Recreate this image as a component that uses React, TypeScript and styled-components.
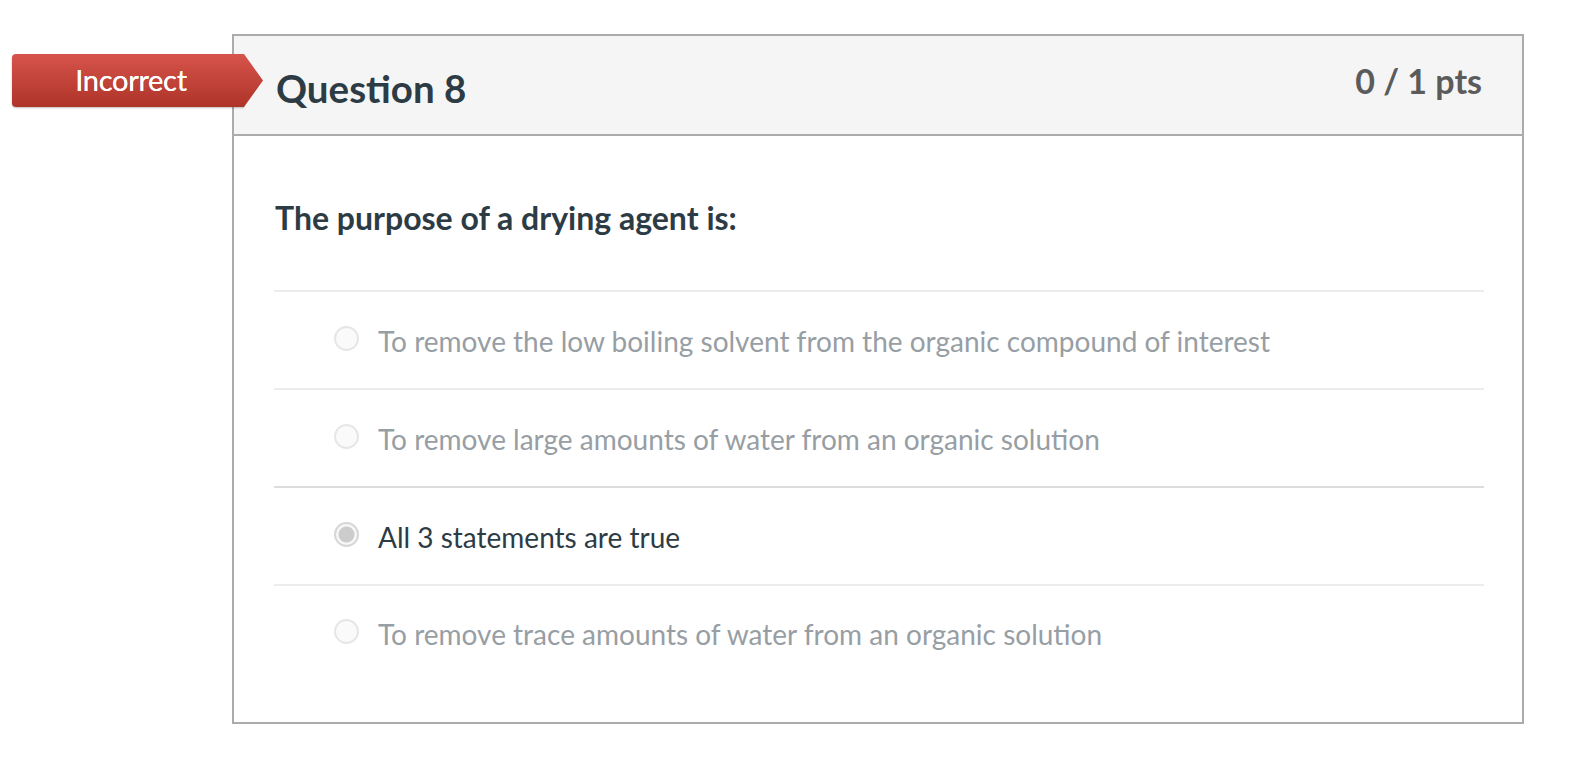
import React from "react";
import styled, { createGlobalStyle } from "styled-components";

const GlobalStyle = createGlobalStyle`
  html, body { margin: 0; padding: 0; background: #ffffff; }
  body { font-family: Lato, "Open Sans", "Liberation Sans", sans-serif; }
  * { box-sizing: border-box; }
`;

const Page = styled.div`
  padding: 34px 0 0 232px;
`;

const Card = styled.div`
  position: relative;
  width: 1292px;
  height: 690px;
  border: 2px solid #ababab;
  background: #ffffff;
`;

const Badge = styled.div`
  position: absolute;
  left: -222px;
  top: 18px;
  width: 232px;
  height: 53px;
  border-radius: 4px 0 0 4px;
  background: linear-gradient(#d6544b, #ae3328);
  box-shadow: 0 1px 2px rgba(0, 0, 0, 0.25);
  color: #ffffff;
  font-size: 29px;
  display: flex;
  align-items: center;
  justify-content: center;
  padding-bottom: 2px;
  padding-left: 6px;
  letter-spacing: -0.3px;
  text-shadow: 0 0 0.4px #ffffff;
  &::after {
    content: "";
    position: absolute;
    right: -19px;
    top: 0;
    width: 19px;
    height: 100%;
    background: linear-gradient(#d6544b, #ae3328);
    clip-path: polygon(0 0, 100% 50%, 0 100%);
  }
`;

const Header = styled.div`
  height: 100px;
  background: #f5f5f5;
  border-bottom: 2px solid #ababab;
  display: flex;
  justify-content: space-between;
  align-items: flex-start;
  padding: 0 40px 0 42px;
`;

const Title = styled.h2`
  margin: 0;
  padding-top: 33px;
  font-size: 38.5px;
  font-weight: 700;
  color: #2d3b45;
  line-height: 1;
`;

const Points = styled.div`
  padding-top: 28px;
  font-size: 34px;
  font-weight: 700;
  color: #5b5b5b;
  line-height: 1;
`;

const Body = styled.div`
  padding: 62px 38px 0 40px;
`;

const QuestionText = styled.p`
  margin: 0 0 52px 1px;
  font-size: 32px;
  font-weight: 700;
  color: #2d3b45;
  line-height: 40px;
`;

const Answers = styled.div`
  display: flex;
  flex-direction: column;
`;

const AnswerRow = styled.div<{ $strong?: boolean }>`
  height: 98px;
  border-top: 2px solid ${(p) => (p.$strong ? "#dcdcdc" : "#ececec")};
  display: flex;
  align-items: center;
  padding-left: 60px;
  padding-top: 2px;
  &:last-child {
    height: 96px;
  }
`;

const Radio = styled.span<{ $checked?: boolean }>`
  width: 25px;
  height: 25px;
  border-radius: 50%;
  flex: none;
  margin-top: -5px;
  border: 2px solid ${(p) => (p.$checked ? "#d6d6d6" : "#e6e6e6")};
  background: ${(p) =>
    p.$checked
      ? "radial-gradient(circle, #cccccc 0 7.5px, #f7f7f7 8.5px)"
      : "#fafafa"};
  margin-right: 19px;
`;

const AnswerText = styled.span<{ $selected?: boolean }>`
  font-size: 28px;
  color: ${(p) => (p.$selected ? "#2d3b45" : "#979ea4")};
`;

const answers = [
  { text: "To remove the low boiling solvent from the organic compound of interest", selected: false },
  { text: "To remove large amounts of water from an organic solution", selected: false },
  { text: "All 3 statements are true", selected: true },
  { text: "To remove trace amounts of water from an organic solution", selected: false },
];

export default function App() {
  return (
    <>
      <GlobalStyle />
      <Page>
        <Card>
          <Badge>Incorrect</Badge>
          <Header>
            <Title>Question 8</Title>
            <Points>0 / 1 pts</Points>
          </Header>
          <Body>
            <QuestionText>The purpose of a drying agent is:</QuestionText>
            <Answers>
              {answers.map((a) => (
                <AnswerRow key={a.text} $strong={a.selected}>
                  <Radio $checked={a.selected} />
                  <AnswerText $selected={a.selected}>{a.text}</AnswerText>
                </AnswerRow>
              ))}
            </Answers>
          </Body>
        </Card>
      </Page>
    </>
  );
}
